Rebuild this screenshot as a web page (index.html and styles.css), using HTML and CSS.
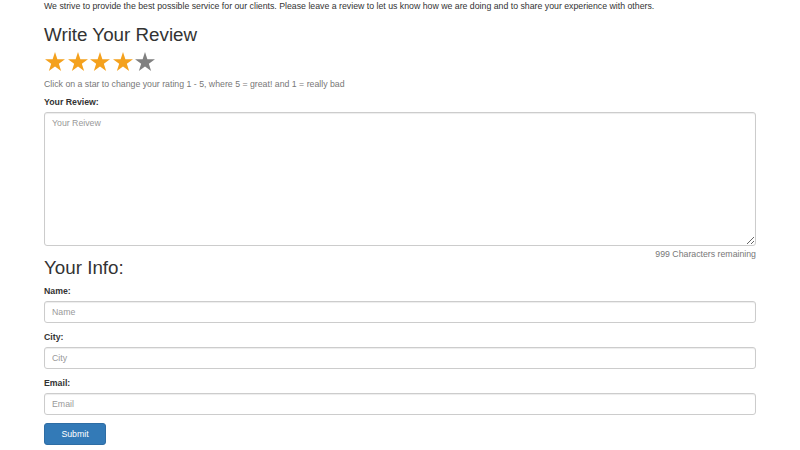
FILE: index.html
```html
<!DOCTYPE html>
<html lang="en">
<head>
    <meta charset="UTF-8">
    <title>Write Your Review</title>
    <meta name="viewport" content="width=device-width, initial-scale=1.0">
    <link rel="stylesheet" href="styles.css">
</head>
<body>

<div class="container">
    <p class="intro">We strive to provide the best possible service for our clients. Please leave a review to let us know how we are doing and to share your experience with others.</p>

    <h3 class="review-title">Write Your Review</h3>
    <div class="stars">
        <svg class="star on" viewBox="0 0 24 24"><polygon points="12,1 14.6,8.9 22.9,8.9 16.2,13.8 18.7,21.7 12,16.8 5.3,21.7 7.8,13.8 1.1,8.9 9.4,8.9"/></svg>
        <svg class="star on" viewBox="0 0 24 24"><polygon points="12,1 14.6,8.9 22.9,8.9 16.2,13.8 18.7,21.7 12,16.8 5.3,21.7 7.8,13.8 1.1,8.9 9.4,8.9"/></svg>
        <svg class="star on" viewBox="0 0 24 24"><polygon points="12,1 14.6,8.9 22.9,8.9 16.2,13.8 18.7,21.7 12,16.8 5.3,21.7 7.8,13.8 1.1,8.9 9.4,8.9"/></svg>
        <svg class="star on" viewBox="0 0 24 24"><polygon points="12,1 14.6,8.9 22.9,8.9 16.2,13.8 18.7,21.7 12,16.8 5.3,21.7 7.8,13.8 1.1,8.9 9.4,8.9"/></svg>
        <svg class="star" viewBox="0 0 24 24"><polygon points="12,1 14.6,8.9 22.9,8.9 16.2,13.8 18.7,21.7 12,16.8 5.3,21.7 7.8,13.8 1.1,8.9 9.4,8.9"/></svg>
    </div>
    <p class="help">Click on a star to change your rating 1 - 5, where 5 = great! and 1 = really bad</p>

    <label class="field-label first">Your Review:</label>
    <textarea class="form-control review" placeholder="Your Reivew"></textarea>
    <div class="remaining">999 Characters remaining</div>

    <h3 class="info-title">Your Info:</h3>

    <div class="group">
        <label class="field-label">Name:</label>
        <input class="form-control" type="text" placeholder="Name">
    </div>
    <div class="group">
        <label class="field-label">City:</label>
        <input class="form-control" type="text" placeholder="City">
    </div>
    <div class="group">
        <label class="field-label">Email:</label>
        <input class="form-control" type="text" placeholder="Email">
    </div>

    <button class="btn">Submit</button>
</div>

</body>
</html>
```

FILE: styles.css
```css
body { font-family: "Liberation Sans", Arial, sans-serif; margin: 0; padding: 0; background: #fff; color: #333; font-size: 8.75px; line-height: 12px; }
.container { padding: 0 44px; }
.intro { margin: 0; }
h3 { font-size: 18.8px; font-weight: normal; margin: 0; }
.review-title { margin-top: 11px; line-height: 24px; }
.stars { display: flex; gap: 0.5px; margin-top: 4px; height: 22px; }
.star { width: 22px; height: 22px; fill: #808080; }
.star.on { fill: #f4a11d; }
.help { color: #777; margin: 5px 0 0; }
.field-label { display: block; font-weight: bold; margin: 8px 0 4px; }
.field-label.first { margin-top: 6px; }
.form-control { display: block; width: 100%; box-sizing: border-box; border: 1px solid #ccc; border-radius: 3px; font-family: inherit; font-size: 8.75px; padding: 4px 7px; color: #555; box-shadow: inset 0 1px 1px rgba(0,0,0,.075); }
.form-control::placeholder { color: #999; }
input.form-control { height: 22px; }
.review { height: 134px; resize: vertical; margin: 0; line-height: 12px; }
.remaining { text-align: right; color: #777; margin-top: 3px; line-height: 10px; }
.info-title { line-height: 18px; }
.btn { display: block; margin-top: 8px; background: #337ab7; border: 1px solid #2e6da4; color: #fff; border-radius: 3px; font-family: inherit; font-size: 8.75px; width: 62px; height: 22px; padding: 0; }
```
